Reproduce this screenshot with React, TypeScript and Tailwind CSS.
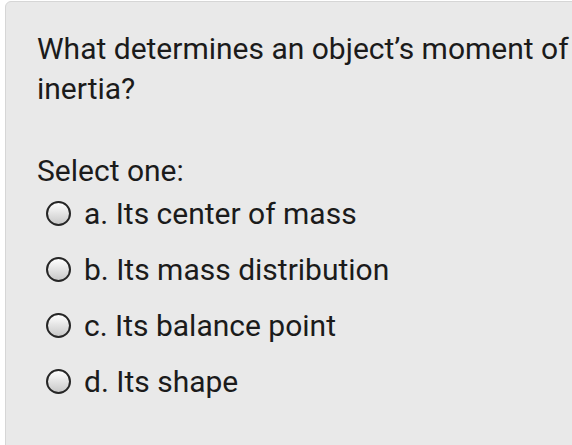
import React from 'react';

const options = [
  'a. Its center of mass',
  'b. Its mass distribution',
  'c. Its balance point',
  'd. Its shape',
];

const Radio: React.FC = () => (
  <span className="inline-block w-[25px] h-[25px] rounded-full border-[2.5px] border-[#262626] bg-gradient-to-b from-white to-[#c8c8c8] shrink-0" />
);

const App: React.FC = () => {
  return (
    <div className="w-[572px] h-[445px] bg-white overflow-hidden pl-[5px] pt-[1px]">
      <div
        className="w-[600px] h-[480px] bg-[#e9e9e9] border border-[#d6d6d6] rounded-tl-[6px] pl-[31px] pt-[27px] text-[#1b1b1b] text-[30px]"
        style={{ fontFamily: 'Roboto, "Noto Sans", sans-serif' }}
      >
        <p className="leading-[40px] w-[535px]">What determines an object’s moment of inertia?</p>
        <p className="leading-[40px] mt-[42px]">Select one:</p>
        <div className="flex flex-col gap-[17px] mt-[3px] pl-[9px]">
          {options.map((o) => (
            <label key={o} className="flex items-center gap-[13px] h-[39px]">
              <Radio />
              <span>{o}</span>
            </label>
          ))}
        </div>
      </div>
    </div>
  );
};

export default App;
